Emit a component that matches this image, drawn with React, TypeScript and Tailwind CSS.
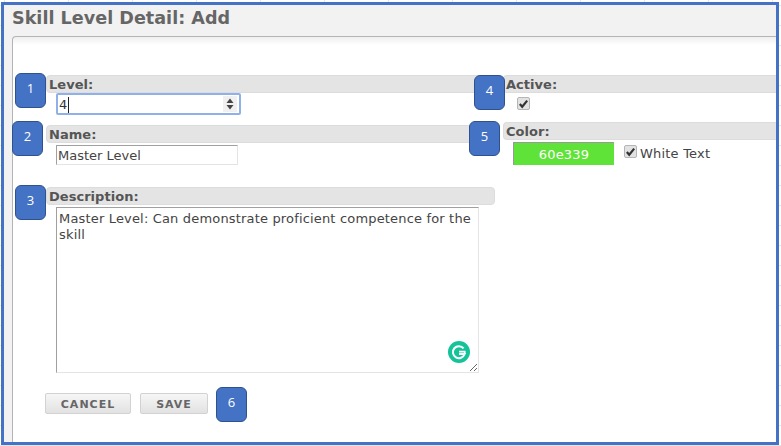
const fontFamily = "font-['DejaVu_Sans',Verdana,sans-serif]"

function Callout({ label, className }: { label: string; className: string }) {
  return (
    <div
      className={`absolute z-10 flex h-[35px] w-[31px] items-center justify-center rounded-[6px] border border-[#2f528f] bg-[#4472c4] pb-[3px] font-['Open_Sans',sans-serif] text-[13px] text-white ${className}`}
    >
      {label}
    </div>
  )
}

function FieldLabel({ children, className = "" }: { children: string; className?: string }) {
  return (
    <div className={`flex h-[18px] items-center rounded-[4px] border border-[#dcdcdc] bg-[#e4e4e4] pl-[2px] text-[13px] leading-none font-bold tracking-[0.03px] text-[#555] ${className}`}>
      {children}
    </div>
  )
}

function Check({ className }: { className: string }) {
  return (
    <div className={`flex h-[13px] w-[13px] items-center justify-center rounded-[2px] border border-[#b5b5b5] bg-[#e2e2e2] ${className}`}>
      <svg viewBox="0 0 12 12" className="h-[11px] w-[11px]">
        <path d="M2 6.5 4.6 9.5 10 2.8" fill="none" stroke="#333" strokeWidth="2.4" />
      </svg>
    </div>
  )
}

function ActionButton({ children, className }: { children: string; className: string }) {
  return (
    <button
      className={`h-[21px] rounded-[2px] border border-[#d2d2d2] bg-gradient-to-b from-[#f6f6f6] to-[#e2e2e2] pt-[2px] text-[11px] leading-none font-bold tracking-[1px] text-[#666] ${className}`}
    >
      {children}
    </button>
  )
}

export default function App() {
  return (
    <div
      className={`h-[446px] w-[781px] overflow-hidden bg-white bg-[linear-gradient(#e6e6e6_1px,transparent_1px),linear-gradient(90deg,#e6e6e6_1px,transparent_1px)] bg-[size:64px_20px] bg-[position:4px_5px] pt-[2px] pl-[1px] ${fontFamily}`}
    >
      <div className="flex h-[443px] w-[778px] flex-col border-[3px] border-[#4472c4] bg-[#f2f2f2]">
        <div className="flex h-[31px] shrink-0 items-center pb-[4px] pl-[8px] text-[17.6px] font-bold text-[#666]">
          Skill Level Detail: Add
        </div>

        <div className="relative ml-[8px] flex-1 rounded-tl-[4px] border-t border-l border-[#b4b4b4] bg-white bg-gradient-to-b from-[#efefef] to-white to-[8px] pt-[38px] pl-[33px]">
          <Callout label="1" className="top-[36px] left-[2px]" />
          <Callout label="2" className="top-[84px] left-[-1px]" />
          <Callout label="3" className="top-[148px] left-[2px]" />
          <Callout label="4" className="top-[38px] left-[461px]" />
          <Callout label="5" className="top-[84px] left-[456px]" />
          <Callout label="6" className="top-[350px] left-[203px]" />

          <div className="flex gap-[8px]">
            <div className="w-[449px] shrink-0">
              <FieldLabel>Level:</FieldLabel>
              <div className="ml-[10px] flex h-[22px] w-[185px] items-center justify-between rounded-[2px] border-2 border-[#8fb0e8] bg-white pr-[2px] pl-[1px] text-[13px] text-[#333]">
                <span className="mt-[1px] border-r border-[#222] pr-[1px] leading-[16px]">4</span>
                <svg viewBox="0 0 14 16" className="h-[16px] w-[14px] bg-[#f0f0f0]">
                  <path d="M7 2.5 10.5 7h-7zM7 13.5 3.5 9h7z" fill="#444" />
                </svg>
              </div>

              <div className="mt-[10px]">
                <FieldLabel>Name:</FieldLabel>
              </div>
              <input
                readOnly
                value="Master Level"
                className="mt-[2px] ml-[10px] block h-[20px] w-[182px] border border-t-[#a0a0a0] border-r-[#e4e4e4] border-b-[#e4e4e4] border-l-[#a0a0a0] px-[1px] text-[13px] text-[#444]"
              />

              <div className="mt-[22px]">
                <FieldLabel>Description:</FieldLabel>
              </div>
              <div className="relative mt-[2px] ml-[10px] h-[166px] w-[423px]">
                <textarea
                  readOnly
                  defaultValue="Master Level: Can demonstrate proficient competence for the skill"
                  className="block h-full w-full border border-t-[#a0a0a0] border-r-[#e4e4e4] border-b-[#e4e4e4] border-l-[#a0a0a0] px-[2px] py-[3px] text-[13px] leading-[16px] tracking-[0.17px] text-[#444]"
                />
                <svg viewBox="0 0 22 22" className="absolute right-[9px] bottom-[10px] h-[22px] w-[22px]">
                  <circle cx="11" cy="11" r="11" fill="#15c39a" />
                  <path d="M15.6 7.4A6 6 0 1 0 16.6 13H11" fill="none" stroke="#fff" strokeWidth="2" />
                  <path d="M11 10.6 16.8 10.6 16.8 13" fill="none" stroke="#fff" strokeWidth="1.6" />
                </svg>
              </div>

              <div className="mt-[20px] -ml-[1px] flex gap-[9px]">
                <ActionButton className="w-[86px]">CANCEL</ActionButton>
                <ActionButton className="w-[68px]">SAVE</ActionButton>
              </div>
            </div>

            <div className="flex-1">
              <FieldLabel className="rounded-r-none border-r-0">Active:</FieldLabel>
              <Check className="mt-[4px] ml-[14px]" />

              <div className="mt-[12px]">
                <FieldLabel className="rounded-r-none border-r-0">Color:</FieldLabel>
              </div>
              <div className="mt-[2px] ml-[10px] flex items-center">
                <div className="flex h-[23px] w-[101px] items-center justify-center border-t border-l border-t-[#999] border-l-[#999] bg-[#60e339] pt-[2px] text-[13px] tracking-[0.2px] text-white">
                  60e339
                </div>
                <Check className="mt-[-4px] ml-[10px]" />
                <span className="mt-[1px] ml-[3px] text-[13px] tracking-[0.2px] text-[#444]">White Text</span>
              </div>
            </div>
          </div>
        </div>
      </div>
    </div>
  )
}
